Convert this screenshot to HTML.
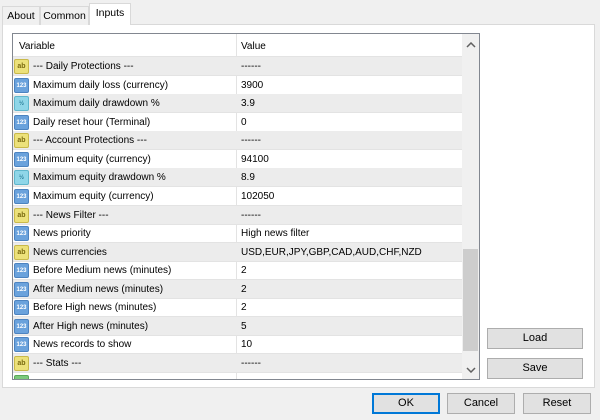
<!DOCTYPE html>
<html><head><style>
*{margin:0;padding:0;box-sizing:border-box}
body{width:600px;height:420px;background:#f0f0f0;font-family:"Liberation Sans",sans-serif;font-size:11px;color:#000;position:relative;overflow:hidden}
.a{position:absolute}
.tab{position:absolute;top:6px;height:19px;border:1px solid #d9d9d9;border-bottom:none;background:#f0f0f0;padding-top:3px;text-align:center;font-size:10.5px}
.panel{position:absolute;left:2px;top:24px;width:593px;height:364px;background:#fff;border:1px solid #d9d9d9}
.list{position:absolute;left:12px;top:33px;width:468px;height:347px;border:1px solid #828790;background:#fff;overflow:hidden;font-size:10px}
.row{position:absolute;left:0;width:449px;height:19px;border-bottom:1px solid #e3e3e3}
.g{background:#ececec}
.row span{position:absolute;top:4px}
.n{left:20px}.v{left:228px}
.ic{position:absolute;left:1px;top:2px;width:15px;height:15px;border-radius:2px;font-size:6px;line-height:14px;text-align:center;font-weight:bold}
.i1{background:#6aa2dc;color:#fff;border:1px solid #4c83c0}
.i2{background:#8fd6e8;color:#2a7f9a;border:1px solid #5fb6cc}
.i3{background:#ece17a;color:#7a6a10;border:1px solid #c9b94a;font-size:7px}
.div{position:absolute;left:223px;top:0;width:1px;height:347px;background:#e3e3e3}
.btn{position:absolute;height:21px;border:1px solid #adadad;background:#e1e1e1;text-align:center;line-height:19px;font-size:11px}
</style></head><body>
<div class="panel"></div>
<div class="tab" style="left:2px;width:38px;">About</div>
<div class="tab" style="left:40px;width:49px;">Common</div>
<div class="tab" style="left:89px;top:3px;height:22px;width:42px;background:#fff;border-color:#d9d9d9;">Inputs</div>
<div class="list">
 <div class="a" style="left:0;top:0;width:449px;height:23px;border-bottom:1px solid #e3e3e3"><span class="a" style="left:6px;top:7px">Variable</span><span class="a" style="left:228px;top:7px">Value</span></div>
 <div class="div"></div>
 <div class="row g" style="top:23px"><div class="ic i3">ab</div><span class="n">--- Daily Protections ---</span><span class="v">------</span></div>
 <div class="row" style="top:41.6px"><div class="ic i1">123</div><span class="n">Maximum daily loss (currency)</span><span class="v">3900</span></div>
 <div class="row g" style="top:60.1px"><div class="ic i2">½</div><span class="n">Maximum daily drawdown %</span><span class="v">3.9</span></div>
 <div class="row" style="top:78.7px"><div class="ic i1">123</div><span class="n">Daily reset hour (Terminal)</span><span class="v">0</span></div>
 <div class="row g" style="top:97.2px"><div class="ic i3">ab</div><span class="n">--- Account Protections ---</span><span class="v">------</span></div>
 <div class="row" style="top:115.8px"><div class="ic i1">123</div><span class="n">Minimum equity (currency)</span><span class="v">94100</span></div>
 <div class="row g" style="top:134.4px"><div class="ic i2">½</div><span class="n">Maximum equity drawdown %</span><span class="v">8.9</span></div>
 <div class="row" style="top:152.9px"><div class="ic i1">123</div><span class="n">Maximum equity (currency)</span><span class="v">102050</span></div>
 <div class="row g" style="top:171.5px"><div class="ic i3">ab</div><span class="n">--- News Filter ---</span><span class="v">------</span></div>
 <div class="row" style="top:190px"><div class="ic i1">123</div><span class="n">News priority</span><span class="v">High news filter</span></div>
 <div class="row g" style="top:208.6px"><div class="ic i3">ab</div><span class="n">News currencies</span><span class="v">USD,EUR,JPY,GBP,CAD,AUD,CHF,NZD</span></div>
 <div class="row" style="top:227.2px"><div class="ic i1">123</div><span class="n">Before Medium news (minutes)</span><span class="v">2</span></div>
 <div class="row g" style="top:245.7px"><div class="ic i1">123</div><span class="n">After Medium news (minutes)</span><span class="v">2</span></div>
 <div class="row" style="top:264.3px"><div class="ic i1">123</div><span class="n">Before High news (minutes)</span><span class="v">2</span></div>
 <div class="row g" style="top:282.8px"><div class="ic i1">123</div><span class="n">After High news (minutes)</span><span class="v">5</span></div>
 <div class="row" style="top:301.4px"><div class="ic i1">123</div><span class="n">News records to show</span><span class="v">10</span></div>
 <div class="row g" style="top:320px"><div class="ic i3">ab</div><span class="n">--- Stats ---</span><span class="v">------</span></div>
 <div class="row" style="top:338.5px"><div class="ic" style="background:#7cc97c;border:1px solid #5aa85a"></div></div>
 <div class="a" style="left:449px;top:0;width:17px;height:345px;background:#f0f0f0"></div>
 <div class="a" style="left:450px;top:215px;width:15px;height:102px;background:#cdcdcd"></div>
 <svg class="a" style="left:453px;top:8px" width="10" height="6"><path d="M1 5 L5 1 L9 5" fill="none" stroke="#606060" stroke-width="1.5"/></svg>
 <svg class="a" style="left:453px;top:333px" width="10" height="6"><path d="M1 1 L5 5 L9 1" fill="none" stroke="#606060" stroke-width="1.5"/></svg>
</div>
<div class="btn" style="left:487px;top:328px;width:96px;">Load</div>
<div class="btn" style="left:487px;top:358px;width:96px;">Save</div>
<div class="btn" style="left:372px;top:393px;width:68px;border:1px solid #0078d7;box-shadow:inset 0 0 0 1px #0078d7">OK</div>
<div class="btn" style="left:447px;top:393px;width:68px;">Cancel</div>
<div class="btn" style="left:523px;top:393px;width:68px;">Reset</div>
</body></html>
